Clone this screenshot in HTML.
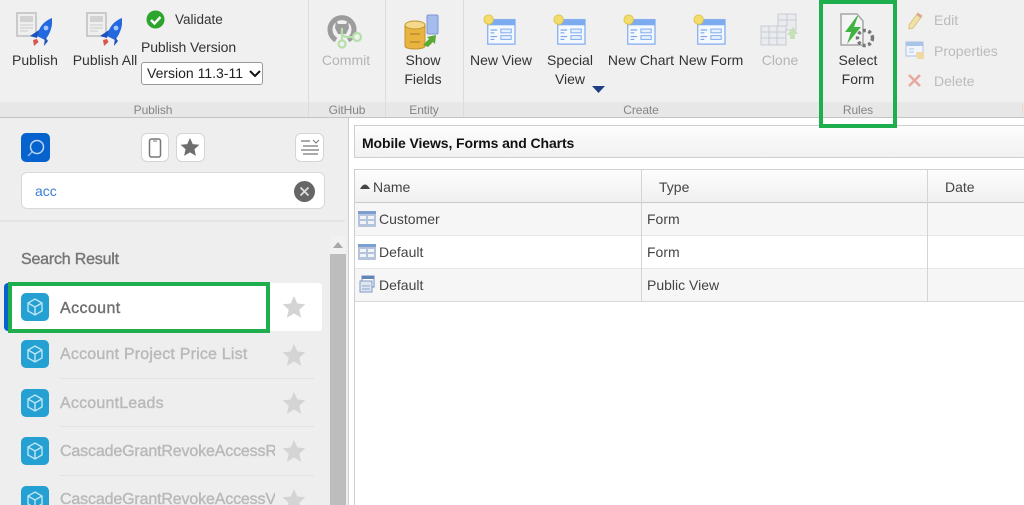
<!DOCTYPE html>
<html><head><meta charset="utf-8"><style>
html,body{margin:0;padding:0;width:1024px;height:505px;overflow:hidden;background:#fff}
body{position:relative;font-family:"Liberation Sans",sans-serif;font-size:14px;color:#333}
.a{position:absolute}
.t{position:absolute;white-space:nowrap;line-height:18px;transform:translateX(-50%);text-align:center}
.l{position:absolute;white-space:nowrap;line-height:18px}
.g{color:#b5b5b5}
.c{font-size:12px;color:#858585;transform:translateX(-50%);position:absolute;line-height:14px;white-space:nowrap;letter-spacing:-.1px}
.sep{position:absolute;top:0;width:1px;height:117px;background:#dcdcdc}
.hl{position:absolute;border:4px solid #1fae4d;box-sizing:border-box}
.it{position:absolute;left:60px;font-size:16px;color:#b9b9b9;-webkit-text-stroke:.4px #b9b9b9;line-height:20px;white-space:nowrap;width:215px;overflow:hidden;letter-spacing:.2px}
.div{position:absolute;left:60px;width:254px;height:1px;background:#e2e2e2}
.btn{position:absolute;top:133px;height:29px;width:29px;box-sizing:border-box;background:#fff;border:1px solid #d5d5d5;border-radius:6px}
.cell{position:absolute;line-height:18px;color:#444;white-space:nowrap}
</style></head><body>
<svg width="0" height="0" style="position:absolute"><defs>
<symbol id="rocket" viewBox="0 0 36 36">
<rect x="1" y="1" width="19" height="23" fill="#efefef" stroke="#c6c6c6" stroke-width="1.800"/>
<rect x="4" y="4" width="13" height="6" fill="#d2d2d2"/><path d="M4 13h13M4 16h13M4 19h8" stroke="#d2d2d2" stroke-width="1.300"/>
<path d="M36 6C37 14 34 22 29 28L21 24C23 15 28 9 36 6z" fill="#2468e0"/><path d="M23 18L14 24l7 2zM29 25l-1 9 4-5z" fill="#1c52bc"/>
<circle cx="30" cy="16" r="2.400" fill="#a4c8ff"/><path d="M17 28l4-1 1.500 3-4.500 4z" fill="#d9554f"/>
</symbol>
<symbol id="nv" viewBox="0 0 34 34">
<rect x="5" y="6" width="29" height="26" fill="#f4f8ff" stroke="#8fb4f2" stroke-width="1.500"/><rect x="5" y="6" width="29" height="6" fill="#7cabf0"/>
<rect x="19" y="16" width="11" height="4" fill="#e6f0ff" stroke="#7ba8ec"/><rect x="19" y="23" width="11" height="4" fill="#e6f0ff" stroke="#7ba8ec"/>
<path d="M8 17h7M8 24h7M8 20h4M8 27h4" stroke="#7ba8ec" stroke-width="1.200"/>
<circle cx="6" cy="6" r="5" fill="#f2dc6b" stroke="#e0c24a"/>
</symbol>
<symbol id="cube" viewBox="0 0 28 28">
<rect width="28" height="28" rx="5" fill="#24a0d2"/><path d="M14 6l7 4v8l-7 4-7-4v-8zM7 10l7 4 7-4M14 14v8" fill="none" stroke="#bfe6f5" stroke-width="1.400"/>
</symbol>
<symbol id="star" viewBox="0 0 24 24"><path d="M12 1l3.300 7.500 8 .8-6 5.400 1.800 8L12 18.500l-7.100 4.200 1.800-8-6-5.400 8-.8z"/></symbol>
<symbol id="frm" viewBox="0 0 18 16"><rect width="18" height="16" rx="1" fill="#b4c4dc"/><rect y="0" width="18" height="3" fill="#7d9fd0"/><rect x="2" y="5" width="6" height="3" fill="#f2f4f8"/><rect x="10" y="5" width="6" height="3" fill="#f2f4f8"/><rect x="2" y="10" width="6" height="3" fill="#f2f4f8"/><rect x="10" y="10" width="6" height="3" fill="#f2f4f8"/></symbol>
</defs></svg>

<!-- Ribbon -->
<div class="a" style="left:0;top:0;width:1024px;height:117px;background:#f0f0f0"></div>
<div class="a" style="left:0;top:102px;width:1024px;height:15px;background:#e7e7e7"></div>
<div class="a" style="left:0;top:117px;width:1024px;height:1px;background:#c4c4c4"></div>
<div class="sep" style="left:308px"></div><div class="sep" style="left:385px"></div><div class="sep" style="left:463px"></div>
<div class="a" style="left:1022px;top:105px;width:1px;height:10px;background:#f0d8c0"></div>

<svg class="a" style="left:16px;top:12px" width="36" height="36"><use href="#rocket"/></svg>
<svg class="a" style="left:86px;top:12px" width="36" height="36"><use href="#rocket"/></svg>
<div class="t" style="left:35px;top:51px">Publish</div>
<div class="t" style="left:105px;top:51px">Publish All</div>
<svg class="a" style="left:146px;top:10px" width="19" height="19"><circle cx="9.500" cy="9.500" r="9" fill="#2da52d"/><path d="M5 10l3.500 3.500L14.500 7" fill="none" stroke="#fff" stroke-width="2.400"/></svg>
<div class="l" style="left:175px;top:11px;font-size:13.500px">Validate</div>
<div class="l" style="left:141px;top:38px;letter-spacing:-.1px">Publish Version</div>
<div class="a" style="left:141px;top:62px;width:122px;height:23px;box-sizing:border-box;background:#fff;border:1px solid #999;border-radius:3px;line-height:21px;padding-left:5px;color:#222;font-size:14px;white-space:nowrap">Version 11.3-11<svg class="a" style="left:107px;top:7px" width="12" height="8"><path d="M1 1l5 5 5-5" fill="none" stroke="#111" stroke-width="2"/></svg></div>
<div class="c" style="left:153px;top:103px">Publish</div>

<svg class="a" style="left:325px;top:12px" width="38" height="38"><path d="M11 28A12 12 0 1 1 23 28" fill="none" stroke="#9c9c9c" stroke-width="5"/><path d="M11 8l2 4h8l2-4 1 8-3 6h-8l-3-6z" fill="#9c9c9c"/><path d="M17 16v15M17 22c2 4 8 3 11 3" fill="none" stroke="#b5e0aa" stroke-width="2.200"/><circle cx="17" cy="32" r="3.500" fill="#f0f0f0" stroke="#b5e0aa" stroke-width="2.200"/><circle cx="32" cy="25" r="4" fill="#f0f0f0" stroke="#b5e0aa" stroke-width="2.200"/></svg>
<div class="t g" style="left:346px;top:51px">Commit</div>
<div class="c" style="left:347px;top:103px">GitHub</div>

<svg class="a" style="left:404px;top:14px" width="36" height="36"><rect x="23" y="1" width="11" height="19" rx="1.500" fill="#a5bdec" stroke="#7a96d0"/><path d="M1 12c0-5 20-5 20 0v20c0 4-20 4-20 0z" fill="#e8b33f" stroke="#c09430"/><ellipse cx="11" cy="11" rx="10" ry="4" fill="#f5d98a" stroke="#c09430"/><path d="M6 20h10M6 28h10" stroke="#a87c22"/><path d="M19 31l6-6-2-2 9-2-1 9-2-2-5 5z" fill="#5aaa35"/></svg>
<div class="t" style="left:423px;top:51px">Show</div><div class="t" style="left:423px;top:70px">Fields</div>
<div class="c" style="left:424px;top:103px">Entity</div>

<svg class="a" style="left:482px;top:14px" width="34" height="32"><use href="#nv"/></svg>
<svg class="a" style="left:552px;top:14px" width="34" height="32"><use href="#nv"/></svg>
<svg class="a" style="left:622px;top:14px" width="34" height="32"><use href="#nv"/></svg>
<svg class="a" style="left:692px;top:14px" width="34" height="32"><use href="#nv"/></svg>
<div class="t" style="left:501px;top:51px">New View</div>
<div class="t" style="left:570px;top:51px">Special</div><div class="t" style="left:570px;top:70px">View</div>
<svg class="a" style="left:592px;top:86px" width="13" height="8"><path d="M0 0h13L6.500 7z" fill="#1f3f85"/></svg>
<div class="t" style="left:641px;top:51px">New Chart</div>
<div class="t" style="left:711px;top:51px">New Form</div>
<svg class="a" style="left:760px;top:13px" width="38" height="34" opacity=".55"><g fill="#e4e8ee" stroke="#a8aeb8"><rect x="18" y="1" width="18" height="16"/><rect x="1" y="13" width="25" height="19"/></g><path d="M1 19h25M1 25h25M9 13v19M17 13v19M18 7h18M27 1v12" stroke="#a8aeb8"/><path d="M27 22l6-8 5 7h-3v5h-5v-4z" fill="#a3d68c"/></svg>
<div class="t g" style="left:780px;top:51px">Clone</div>
<div class="c" style="left:641px;top:103px">Create</div>

<svg class="a" style="left:840px;top:13px" width="36" height="36"><path d="M1 1h16l6 7v24H1z" fill="#f4f4f4" stroke="#a5a5a5" stroke-width="1.500"/><path d="M17 3L5 19h6l-4 12 14-17h-7l4-11z" fill="#3fb33f"/><circle cx="25" cy="25" r="7.500" fill="none" stroke="#777" stroke-width="3.500" stroke-dasharray="3 2.500"/></svg>
<div class="t" style="left:858px;top:51px">Select</div><div class="t" style="left:858px;top:70px">Form</div>
<div class="c" style="left:858px;top:103px">Rules</div>

<svg class="a" style="left:907px;top:11px" width="17" height="19"><path d="M11 2l4 3-9 12-4 1 0-4z" fill="#f0e2a8" stroke="#d8c47c"/><path d="M11 2l4 3-1.500 2-4-3z" fill="#e0a0a0"/></svg>
<div class="l g" style="left:934px;top:11px;color:#bbb">Edit</div>
<svg class="a" style="left:905px;top:41px" width="20" height="19"><rect x="1" y="1" width="17" height="14" fill="#f2f6fc" stroke="#a9c4e6"/><rect x="1" y="1" width="17" height="4" fill="#a9c4e6"/><path d="M4 8h5M4 11h5" stroke="#a9c4e6"/><path d="M11 11h8v7h-7z" fill="#f0d9a0"/></svg>
<div class="l g" style="left:934px;top:42px;color:#bbb">Properties</div>
<svg class="a" style="left:907px;top:73px" width="15" height="15"><path d="M2 2l11 11M13 2L2 13" stroke="#e8a8a0" stroke-width="2.500"/></svg>
<div class="l g" style="left:934px;top:72px;color:#bbb">Delete</div>

<!-- Left panel -->
<div class="a" style="left:0;top:118px;width:348px;height:387px;background:#eeeeee"></div>
<div class="a" style="left:348px;top:118px;width:1px;height:387px;background:#cfcfcf"></div>
<div class="a" style="left:0;top:220px;width:345px;height:2px;background:#e4e4e4"></div>

<div class="a" style="left:21px;top:133px;width:29px;height:29px;background:#0662cd;border-radius:5px"></div>
<svg class="a" style="left:26px;top:137px" width="20" height="21"><circle cx="11" cy="10" r="6.500" fill="none" stroke="#bcd8f5" stroke-width="1.500"/><path d="M6 15l-4 4" stroke="#8fbcec" stroke-width="1.500"/></svg>
<div class="btn" style="left:141px;width:28px"></div>
<svg class="a" style="left:148px;top:138px" width="14" height="20"><rect x="1.500" y="1" width="11" height="18" rx="2" fill="none" stroke="#777" stroke-width="1.500"/><path d="M5 3h4" stroke="#777"/></svg>
<div class="btn" style="left:176px"></div>
<svg class="a" style="left:180px;top:137px;fill:#6e6e6e" width="20" height="20"><use href="#star"/></svg>
<div class="btn" style="left:295px"></div>
<svg class="a" style="left:300px;top:139px" width="20" height="18"><path d="M1 2h9M3 7h15M1 11h18M3 15h15" stroke="#777" stroke-width="1.200"/><path d="M13 1l3 3 3-3" fill="none" stroke="#777"/></svg>

<div class="a" style="left:21px;top:172px;width:304px;height:37px;box-sizing:border-box;background:#fff;border:1px solid #d8d8d8;border-radius:6px"></div>
<div class="l" style="left:35px;top:182px;color:#3a7fd5;font-size:14px">acc</div>
<svg class="a" style="left:294px;top:181px" width="21" height="21"><circle cx="10.500" cy="10.500" r="10.500" fill="#666"/><path d="M6.500 6.500l8 8M14.500 6.500l-8 8" stroke="#ddd" stroke-width="1.800"/></svg>

<div class="a" style="left:21px;top:250px;font-size:16px;color:#777;-webkit-text-stroke:.4px #777;line-height:20px;letter-spacing:-.2px">Search Result</div>

<div class="a" style="left:4px;top:283px;width:10px;height:48px;background:#0662cd;border-radius:4px 0 0 4px"></div>
<div class="a" style="left:8px;top:283px;width:314px;height:48px;background:#fff;border-radius:3px"></div>
<svg class="a" style="left:21px;top:293px" width="28" height="28"><use href="#cube"/></svg>
<div class="it" style="top:299px;color:#6f6f6f;-webkit-text-stroke:.4px #6f6f6f;letter-spacing:.4px">Account</div>
<svg class="a" style="left:282px;top:295px;fill:#d4d4d4" width="24" height="24"><use href="#star"/></svg>

<svg class="a" style="left:21px;top:340px" width="28" height="28"><use href="#cube"/></svg>
<div class="it" style="top:345px">Account Project Price List</div>
<svg class="a" style="left:282px;top:343px;fill:#d4d4d4" width="24" height="24"><use href="#star"/></svg>
<div class="div" style="top:378px"></div>

<svg class="a" style="left:21px;top:389px" width="28" height="28"><use href="#cube"/></svg>
<div class="it" style="top:394px">AccountLeads</div>
<svg class="a" style="left:282px;top:391px;fill:#d4d4d4" width="24" height="24"><use href="#star"/></svg>
<div class="div" style="top:426px"></div>

<svg class="a" style="left:21px;top:437px" width="28" height="28"><use href="#cube"/></svg>
<div class="it" style="top:442px;letter-spacing:-.15px">CascadeGrantRevokeAccessR</div>
<svg class="a" style="left:282px;top:439px;fill:#d4d4d4" width="24" height="24"><use href="#star"/></svg>
<div class="div" style="top:475px"></div>

<svg class="a" style="left:21px;top:486px" width="28" height="28"><use href="#cube"/></svg>
<div class="it" style="top:490px;letter-spacing:-.15px">CascadeGrantRevokeAccessV</div>
<svg class="a" style="left:282px;top:488px;fill:#d4d4d4" width="24" height="24"><use href="#star"/></svg>

<div class="a" style="left:330px;top:236px;width:16px;height:269px;background:#f1f1f1"></div>
<svg class="a" style="left:333px;top:242px" width="10" height="6"><path d="M0 6L5 0l5 6z" fill="#a8a8a8"/></svg>
<div class="a" style="left:330px;top:254px;width:16px;height:251px;background:#bdbdbd"></div>

<!-- Right panel -->
<div class="a" style="left:354px;top:125px;width:671px;height:33px;box-sizing:border-box;border:1px solid #cfcfcf;background:linear-gradient(#fdfdfd,#f1f1f1)"></div>
<div class="l" style="left:362px;top:134px;font-weight:bold;color:#111;letter-spacing:-.1px">Mobile Views, Forms and Charts</div>

<div class="a" style="left:354px;top:169px;width:1px;height:336px;background:#cfcfcf"></div>
<div class="a" style="left:354px;top:169px;width:670px;height:1px;background:#cfcfcf"></div>
<div class="a" style="left:355px;top:170px;width:669px;height:33px;background:linear-gradient(#fdfdfd,#f0f0f0);border-bottom:1px solid #c8c8c8;box-sizing:border-box"></div>
<div class="a" style="left:355px;top:203px;width:669px;height:33px;background:#f6f6f6;border-bottom:1px solid #e6e6e6;box-sizing:border-box"></div>
<div class="a" style="left:355px;top:236px;width:669px;height:33px;background:#fff;border-bottom:1px solid #e6e6e6;box-sizing:border-box"></div>
<div class="a" style="left:355px;top:269px;width:669px;height:33px;background:#f6f6f6;border-bottom:1px solid #d8d8d8;box-sizing:border-box"></div>
<div class="a" style="left:641px;top:170px;width:1px;height:132px;background:#d4d4d4"></div>
<div class="a" style="left:927px;top:170px;width:1px;height:132px;background:#d4d4d4"></div>

<svg class="a" style="left:360px;top:183px" width="10" height="6"><path d="M0 6Q5-3 10 6z" fill="#444"/></svg>
<div class="cell" style="left:373px;top:178px">Name</div>
<div class="cell" style="left:659px;top:178px">Type</div>
<div class="cell" style="left:945px;top:178px">Date</div>

<svg class="a" style="left:358px;top:211px" width="18" height="16"><use href="#frm"/></svg>
<div class="cell" style="left:379px;top:210px">Customer</div>
<div class="cell" style="left:647px;top:210px">Form</div>
<svg class="a" style="left:358px;top:244px" width="18" height="16"><use href="#frm"/></svg>
<div class="cell" style="left:379px;top:243px">Default</div>
<div class="cell" style="left:647px;top:243px">Form</div>
<svg class="a" style="left:359px;top:275px" width="16" height="18"><rect x="3" y="1" width="12" height="11" fill="#fff" stroke="#6d8fc4"/><rect x="3" y="1" width="12" height="3" fill="#5f84b8"/><rect x="1" y="6" width="12" height="11" fill="#dfe6f0" stroke="#7f9bc4"/><path d="M3 11h8M3 14h8" stroke="#8aa6cc"/></svg>
<div class="cell" style="left:379px;top:276px">Default</div>
<div class="cell" style="left:647px;top:276px">Public View</div>

<!-- Green highlights -->
<div class="hl" style="left:819px;top:0;width:78px;height:128px"></div>
<div class="hl" style="left:8px;top:282px;width:262px;height:51px"></div>
</body></html>
